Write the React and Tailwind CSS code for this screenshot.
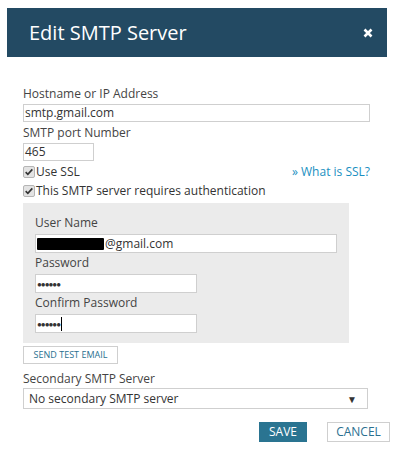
import React from 'react';

const Check = () => (
  <span className="inline-flex h-[12px] w-[12px] items-center justify-center rounded-[2px] border border-[#b5b5b5] bg-[#e3e3e3]">
    <svg viewBox="0 0 12 12" className="h-[10px] w-[10px]">
      <path d="M2 6.2 L4.6 8.8 L10 2.8" fill="none" stroke="#333" strokeWidth="2" />
    </svg>
  </span>
);

export default function App() {
  return (
    <div className="h-[450px] w-[397px] bg-white text-[#333]" style={{ fontFamily: '"Open Sans", sans-serif' }}>
      <div className="pt-[8px] pl-[7px] pr-[10px]">
        <div className="flex h-[49px] items-center justify-between bg-[#234a63] pl-[22px] pr-[14px]">
          <span className="text-[20px] leading-none text-white">Edit SMTP Server</span>
          <svg viewBox="0 0 10 10" className="h-[10px] w-[10px]">
            <path d="M1.5 1.5 L8.5 8.5 M8.5 1.5 L1.5 8.5" stroke="#fff" strokeWidth="2.6" />
          </svg>
        </div>
      </div>

      <div className="px-[23px] pt-[29px] text-[12px] leading-[16px]">
        <div className="text-[#444]">Hostname or IP Address</div>
        <div className="mt-[2px] flex h-[18px] w-[347px] items-center border border-[#cfcfcf] px-[1px]">smtp.gmail.com</div>
        <div className="mt-[3px] text-[#444]">SMTP port Number</div>
        <div className="mt-[2px] flex h-[18px] w-[71px] items-center border border-[#cfcfcf] px-[1px]">465</div>

        <div className="mt-[3px] flex items-center justify-between">
          <label className="flex items-center gap-[1px]">
            <Check />
            <span>Use SSL</span>
          </label>
          <span className="mr-[4px] text-[#1a8fc1]">» What is SSL?</span>
        </div>
        <label className="mt-[3px] flex items-center gap-[1px]">
          <Check />
          <span>This SMTP server requires authentication</span>
        </label>

        <div className="mt-[4px] w-[326px] bg-[#ebebeb] px-[12px] pt-[12px] pb-[10px]">
          <div className="text-[#444]">User Name</div>
          <div className="mt-[3px] flex h-[19px] w-[302px] items-center border border-[#cfcfcf] bg-white px-[1px]">
            <span className="mr-[1px] inline-block h-[12px] w-[67px] rounded-[1px] bg-black" />
            <span>@gmail.com</span>
          </div>
          <div className="mt-[2px] text-[#444]">Password</div>
          <div className="mt-[3px] flex h-[19px] w-[162px] items-center border border-[#cfcfcf] bg-white px-[1px] text-[8px] tracking-[-1px]">
            ●●●●●●
          </div>
          <div className="mt-[2px] text-[#444]">Confirm Password</div>
          <div className="mt-[3px] flex h-[19px] w-[162px] items-center border border-[#cfcfcf] bg-white px-[1px] text-[8px] tracking-[-1px]">
            ●●●●●●<span className="ml-[1px] inline-block h-[14px] w-[1px] bg-black" />
          </div>
        </div>

        <button className="mt-[3px] flex h-[18px] w-[95px] items-center justify-center border border-[#cfcfcf] bg-white text-[9px] text-[#2a6f8f]">
          SEND TEST EMAIL
        </button>

        <div className="mt-[7px] text-[#444]">Secondary SMTP Server</div>
        <div className="mt-[1px] flex h-[21px] w-[345px] items-center justify-between border border-[#cfcfcf] pl-[5px] pr-[10px]">
          <span>No secondary SMTP server</span>
          <span className="text-[10px]">▼</span>
        </div>

        <div className="mt-[13px] mr-[-16px] flex justify-end gap-[20px]">
          <button className="flex h-[20px] w-[48px] items-center justify-center bg-[#2a7491] text-[12px] text-white">SAVE</button>
          <button className="flex h-[20px] w-[63px] items-center justify-center border border-[#cfcfcf] bg-white text-[12px] text-[#2a6f8f]">CANCEL</button>
        </div>
      </div>
    </div>
  );
}
